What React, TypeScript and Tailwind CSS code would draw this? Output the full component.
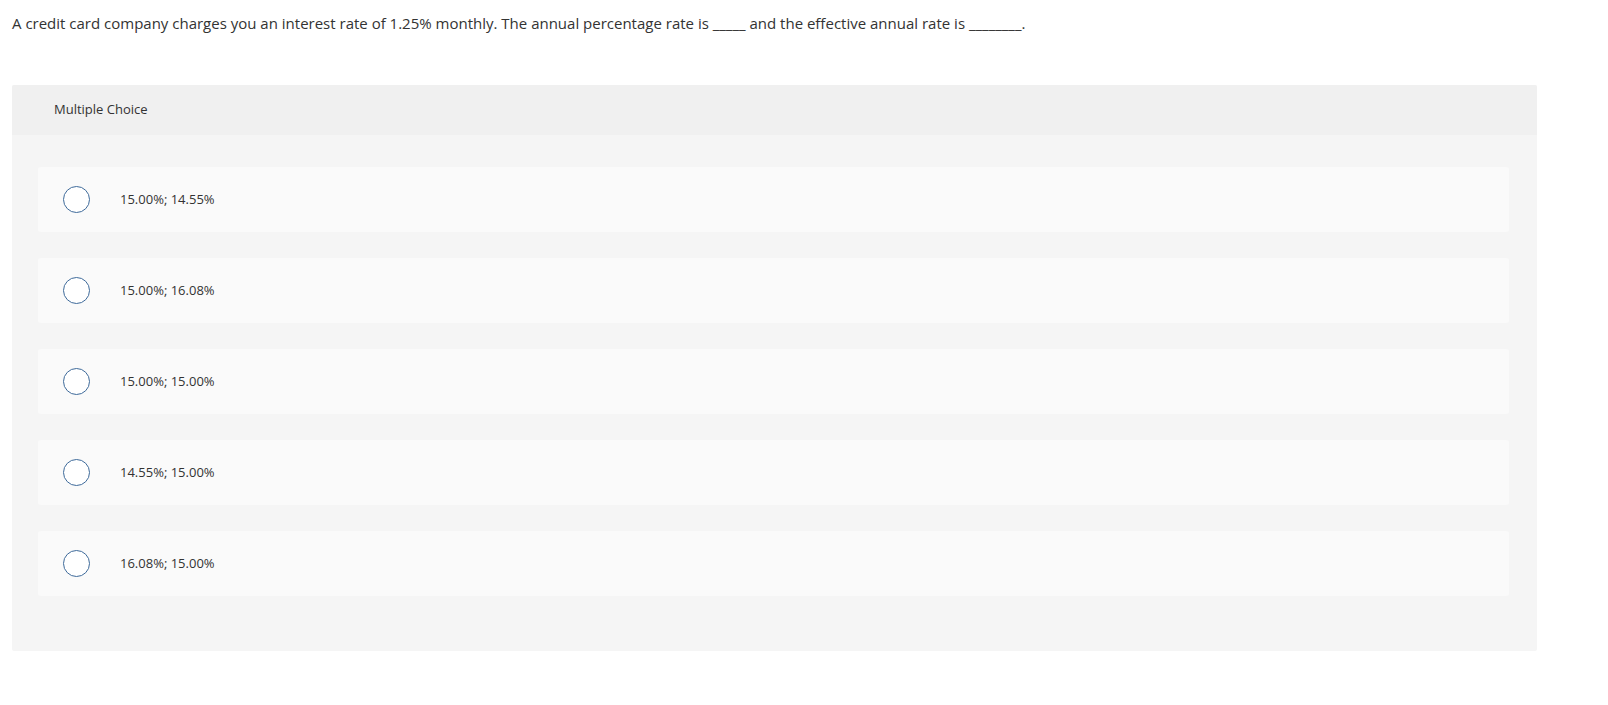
import React from "react";

const options = [
  "15.00%; 14.55%",
  "15.00%; 16.08%",
  "15.00%; 15.00%",
  "14.55%; 15.00%",
  "16.08%; 15.00%",
];

export default function App() {
  return (
    <div className="min-h-[705px] bg-white text-[#333] [font-family:'Open_Sans',Lato,sans-serif]">
      <p className="pl-[12px] pt-[13px] text-[15px] leading-[20px] text-[#333]">
        A credit card company charges you an interest rate of 1.25% monthly. The annual percentage rate is _____ and the effective annual rate is ________.
      </p>
      <div className="ml-[12px] mt-[52px] w-[1525px] rounded-[2px] bg-[#f5f5f5] pb-[55px]">
        <div className="flex h-[50px] items-center rounded-t-[2px] bg-[#f0f0f0] pl-[42px] text-[13px] text-[#333]">
          Multiple Choice
        </div>
        <div className="flex flex-col gap-[26px] pl-[26px] pr-[28px] pt-[32px]">
          {options.map((o) => (
            <div
              key={o}
              className="flex h-[65px] items-center rounded-[3px] bg-[#fafafa]"
            >
              <span className="ml-[25px] h-[27px] w-[27px] shrink-0 rounded-full border-[1.5px] border-[#3e6a9a] bg-white" />
              <span className="ml-[30px] text-[13px] text-[#333]">{o}</span>
            </div>
          ))}
        </div>
      </div>
    </div>
  );
}
